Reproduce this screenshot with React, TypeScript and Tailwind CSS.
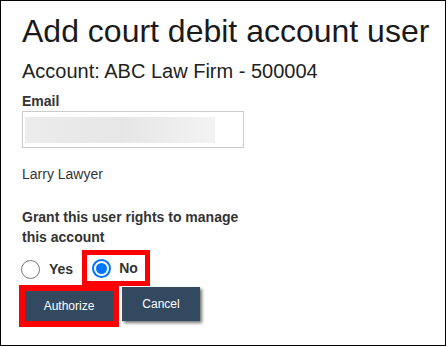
import React from "react";

const font = { fontFamily: '"Liberation Sans", Arial, sans-serif' };

function Radio({ checked }: { checked?: boolean }) {
  if (checked) {
    return (
      <div className="w-[19px] h-[19px] rounded-full border-2 border-[#0075ff] bg-white flex items-center justify-center shrink-0">
        <div className="w-[11px] h-[11px] rounded-full bg-[#0075ff]" />
      </div>
    );
  }
  return <div className="w-[19px] h-[19px] rounded-full border border-[#767676] bg-white shrink-0" />;
}

export default function App() {
  return (
    <div style={font} className="w-[446px] h-[346px] border border-black bg-white overflow-hidden">
      <div className="pl-[21px] pt-[11px] flex flex-col">
        <h1 className="text-[32px] leading-[38px] text-[#1a1a1a] whitespace-nowrap">Add court debit account user</h1>
        <div className="mt-[9px] text-[20px] leading-[24px] text-[#222]">Account: ABC Law Firm - 500004</div>
        <div className="mt-[9px] text-[14px] leading-[18px] font-bold text-[#333]">Email</div>
        <div className="mt-[1px] w-[222px] h-[37px] border border-[#cccccc] pl-[2px] pt-[5px]">
          <div className="w-[190px] h-[26px] bg-gradient-to-r from-[#ececec] via-[#e6e6e6] to-[#f3f3f3]" />
        </div>
        <div className="mt-[17px] text-[14px] leading-[18px] text-[#333]">Larry Lawyer</div>
        <div className="mt-[24px] w-[240px] text-[14px] leading-[20px] font-bold text-[#333]">
          Grant this user rights to manage this account
        </div>
        <div className="mt-[3px] h-[36px] flex items-center">
          <div className="-ml-[1px] mt-[2px] flex items-center">
            <Radio />
            <span className="ml-[9px] text-[14px] font-bold text-[#333]">Yes</span>
          </div>
          <div className="ml-[9px] border-[5px] border-[#ff0000] h-[36px] flex items-center pl-[5px] pr-[7px]">
            <Radio checked />
            <span className="ml-[8px] text-[14px] font-bold text-[#333]">No</span>
          </div>
        </div>
        <div className="-mt-[1px] flex items-start">
          <div className="-ml-[3px] border-[6px] border-[#ff0000] w-[100px] h-[42px]">
            <div className="w-full h-full bg-[#33495f] text-white text-[12px] flex items-center justify-center">Authorize</div>
          </div>
          <div className="ml-[3px] mt-[2px] w-[78px] h-[34px] bg-[#33495f] text-white text-[12px] flex items-center justify-center shadow-[2px_2px_3px_rgba(0,0,0,0.55)]">
            Cancel
          </div>
        </div>
      </div>
    </div>
  );
}
